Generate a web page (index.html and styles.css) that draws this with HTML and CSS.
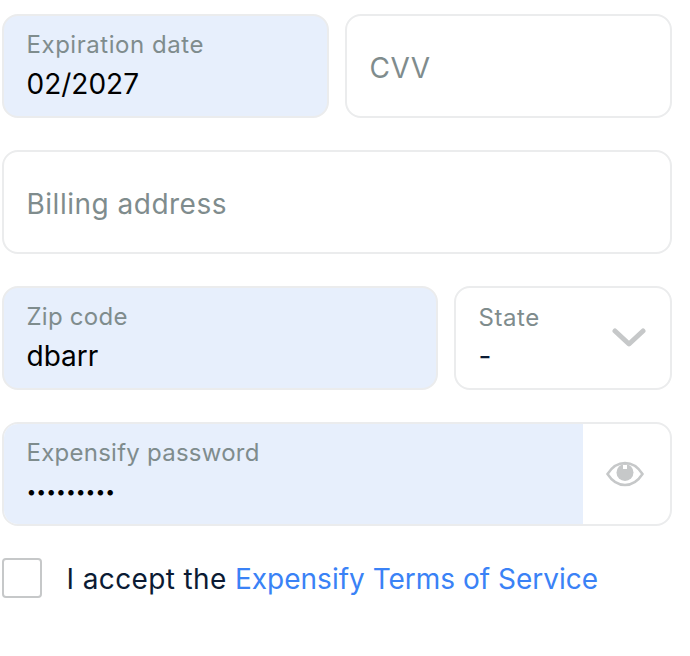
FILE: index.html
```html
<!DOCTYPE html>
<html lang="en">

<head>
    <meta charset="UTF-8">
    <meta name="viewport" content="width=device-width, initial-scale=1.0">
    <title>Add card</title>
    <link rel="stylesheet" href="styles.css">
</head>

<body>
    <form class="card-form">

        <div class="form-row">
            <div class="field half filled">
                <span class="label small">Expiration date</span>
                <span class="value">02/2027</span>
            </div>
            <div class="field half">
                <span class="label">CVV</span>
            </div>
        </div>

        <div class="form-row">
            <div class="field wide">
                <span class="label">Billing address</span>
            </div>
        </div>

        <div class="form-row">
            <div class="field zip filled">
                <span class="label small tight">Zip code</span>
                <span class="value">dbarr</span>
            </div>
            <div class="field state">
                <div class="state-text">
                    <span class="label small">State</span>
                    <span class="value dark">-</span>
                </div>
                <svg class="chevron" width="34" height="20" viewBox="0 0 34 20">
                    <path d="M3 3 L17 16 L31 3" fill="none" stroke="#c6c8c9" stroke-width="5" stroke-linecap="round" stroke-linejoin="round" />
                </svg>
            </div>
        </div>

        <div class="form-row">
            <div class="field wide password">
                <div class="password-text">
                    <span class="label small tight">Expensify password</span>
                    <span class="dots">•••••••••</span>
                </div>
                <div class="eye-box">
                    <svg width="38" height="26" viewBox="0 0 38 26">
                        <path d="M1.5 13 C6 6 12 2 19 2 C26 2 32 6 36.5 13 C32 20 26 24 19 24 C12 24 6 20 1.5 13 Z" fill="none" stroke="#c6c8c9" stroke-width="2.5" />
                        <circle cx="19" cy="11.5" r="8.5" fill="#c6c8c9" />
                        <rect x="17" y="4" width="4" height="4" fill="#fff" />
                    </svg>
                </div>
            </div>
        </div>

        <label class="accept">
            <span class="checkbox"></span>
            <span class="accept-text">I accept the <a href="#" class="terms">Expensify Terms of Service</a></span>
        </label>

    </form>
</body>

</html>
```

FILE: styles.css
```css
* {
    margin: 0;
    padding: 0;
    box-sizing: border-box;
}

body {
    background-color: white;
    font-family: Inter, "Noto Sans", sans-serif;
}

.card-form {
    display: flex;
    flex-direction: column;
    gap: 32px;
    padding: 14px 18px 0 2px;
}

.form-row {
    display: flex;
    gap: 16px;
}

.field {
    height: 104px;
    border: 2px solid #ebeced;
    border-radius: 16px;
    padding: 0 22.5px;
    display: flex;
    flex-direction: column;
    justify-content: center;
    overflow: hidden;
}

.half {
    width: 327px;
}

.wide {
    width: 100%;
}

.zip {
    width: 436px;
}

.state {
    width: 218px;
    flex-direction: row;
    align-items: center;
    justify-content: space-between;
    padding-right: 24px;
}

.state-text,
.password-text {
    display: flex;
    flex-direction: column;
}

.filled,
.password-text {
    background-color: #e7effc;
}

.filled {
    padding-bottom: 2px;
}

.label {
    font-size: 28px;
    letter-spacing: 0.5px;
    margin-top: 4px;
    color: #7f8c8d;
}

.label.small {
    font-size: 24px;
    letter-spacing: 0.55px;
    line-height: 32px;
    margin-top: 0;
    margin-bottom: 5px;
}

.label.small.tight {
    letter-spacing: 0.25px;
}

.state .label.small {
    margin-bottom: 4px;
}

.value {
    font-size: 28px;
    line-height: 36px;
    color: black;
}

.value.dark {
    color: #0b1b34;
}

.password {
    flex-direction: row;
    padding: 0;
    justify-content: flex-start;
}

.password-text {
    flex: 1;
    height: 100%;
    padding: 0 22.5px 2px;
    justify-content: center;
}

.dots {
    font-size: 17.5px;
    line-height: 36px;
    color: black;
}

.eye-box {
    width: 87.5px;
    padding-right: 2px;
    display: flex;
    align-items: center;
    justify-content: center;
}

.accept {
    display: flex;
    align-items: center;
    gap: 24.5px;
    cursor: pointer;
}

.checkbox {
    width: 40px;
    height: 40px;
    border: 2px solid #c6c8c9;
    border-radius: 4px;
}

.accept-text {
    font-size: 28px;
    letter-spacing: 0.38px;
    padding-top: 2px;
    color: #0b1b34;
}

.terms {
    color: #3a82f6;
    letter-spacing: 0;
    text-decoration: none;
}
```
